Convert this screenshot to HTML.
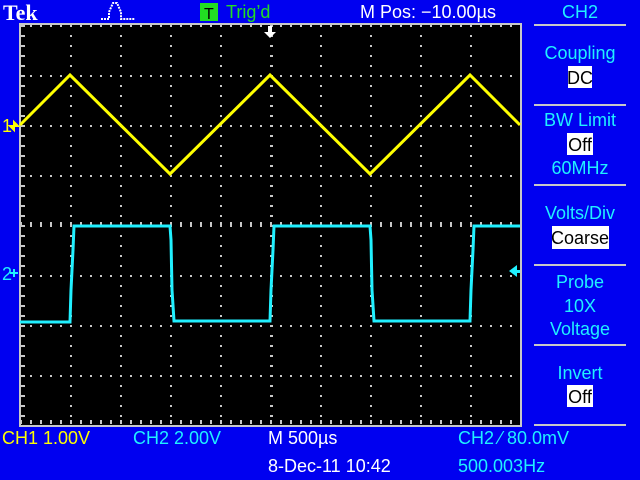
<!DOCTYPE html>
<html><head><meta charset="utf-8"><style>
html,body{margin:0;padding:0;background:#0000f0;}
svg{display:block}
text{font-family:"Liberation Sans Narrow","Liberation Sans",sans-serif;font-size:18px;}
</style></head><body>
<svg width="640" height="480" viewBox="0 0 640 480" xmlns="http://www.w3.org/2000/svg">
<defs>
<pattern id="hd" x="20" y="25" width="10" height="50" patternUnits="userSpaceOnUse"><rect x="0" y="0" width="2" height="2" fill="#c8c8c8"/></pattern>
<pattern id="vd" x="20" y="25" width="50" height="10" patternUnits="userSpaceOnUse"><rect x="0" y="0" width="2" height="2" fill="#c8c8c8"/></pattern>
<pattern id="tk" x="20" y="0" width="10" height="10" patternUnits="userSpaceOnUse"><rect x="0" y="0" width="2" height="5" fill="#c8c8c8"/></pattern>
<pattern id="tkv" x="0" y="25" width="10" height="10" patternUnits="userSpaceOnUse"><rect x="0" y="0" width="5" height="2" fill="#c8c8c8"/></pattern>
</defs>
<rect x="0" y="0" width="640" height="480" fill="#0000f0"/>
<rect x="20" y="24" width="501" height="402" fill="#000"/>
<rect x="20" y="24" width="501" height="402" fill="none" stroke="#c8c8c8" stroke-width="2"/>
<rect x="21" y="25" width="499" height="400" fill="url(#hd)"/>
<rect x="21" y="25" width="499" height="400" fill="url(#vd)"/>
<!-- edge ticks -->
<rect x="21" y="25" width="499" height="4" fill="url(#tk)" transform="translate(0,0)"/>
<rect x="21" y="420" width="499" height="4" fill="url(#tk)"/>
<rect x="21" y="25" width="4" height="399" fill="url(#tkv)"/>
<rect x="516" y="25" width="4" height="399" fill="url(#tkv)"/>
<!-- center ticks -->
<rect x="267" y="25" width="6" height="399" fill="url(#tkv)"/>
<rect x="21" y="222" width="499" height="6" fill="url(#tk)"/>
<!-- trigger pos marker -->
<polygon points="264,32 276,32 270,38" fill="#fff"/><rect x="268" y="26" width="4" height="7" fill="#fff"/>
<!-- yellow -->
<polyline points="20,125 70,75 170,174 270,75 370,174 470,75 520,125" fill="none" stroke="#ffff00" stroke-width="3"/>
<!-- cyan -->
<polyline points="20,322 70,322 71,290 73,250 74,226 170,226 171,240 172,290 174,321 270,321 271,290 273,250 274,226 370,226 371,240 372,290 374,321 470,321 471,290 473,250 474,226 520,226" fill="none" stroke="#20f0ff" stroke-width="3"/>
<polygon points="509,271 517,265 517,277" fill="#20f0ff"/><rect x="513" y="270" width="7" height="3" fill="#20f0ff"/>
<!-- left markers -->
<text x="2" y="132" fill="#ffff00">1</text><polygon points="10,126 18,126 14,122 14,130" fill="#ffff00" stroke="#ffff00" stroke-width="2"/>
<text x="2" y="280" fill="#20f0ff">2</text><polygon points="10,273 18,273" stroke="#20f0ff" stroke-width="2"/><line x1="14" y1="269" x2="14" y2="277" stroke="#20f0ff" stroke-width="2"/>
<!-- top bar -->
<text x="3" y="20" fill="#fff" style="font-family:'Liberation Serif',serif;font-weight:bold;font-size:22px">Tek</text>
<polyline points="101,19 109,19 109,12 113,3 117,3 121,12 121,19 135,19" fill="none" stroke="#fff" stroke-width="2" stroke-dasharray="2 1"/>
<rect x="200" y="3" width="18" height="18" fill="#22dd22"/>
<text x="204" y="19" fill="#000" style="font-size:16px">T</text>
<text x="226" y="18" fill="#22dd22">Trig’d</text>
<text x="360" y="18" fill="#fff">M Pos: −10.00µs</text>
<text x="580" y="18" fill="#20f0ff" text-anchor="middle">CH2</text>
<!-- right panel -->
<g fill="#c8c8c8"><rect x="534" y="24" width="92" height="2"/><rect x="534" y="104" width="92" height="2"/><rect x="534" y="184" width="92" height="2"/><rect x="534" y="264" width="92" height="2"/><rect x="534" y="344" width="92" height="2"/><rect x="534" y="424" width="92" height="2"/></g>
<g fill="#20f0ff" text-anchor="middle">
<text x="580" y="59">Coupling</text>
<text x="580" y="126">BW Limit</text>
<text x="580" y="174">60MHz</text>
<text x="580" y="219">Volts/Div</text>
<text x="580" y="288">Probe</text>
<text x="580" y="312">10X</text>
<text x="580" y="335">Voltage</text>
<text x="580" y="379">Invert</text>
</g>
<rect x="568" y="66" width="24" height="22" fill="#fff"/><text x="580" y="84" text-anchor="middle" fill="#000">DC</text>
<rect x="567" y="133" width="26" height="22" fill="#fff"/><text x="580" y="151" text-anchor="middle" fill="#000">Off</text>
<rect x="552" y="226" width="57" height="23" fill="#fff"/><text x="580" y="244" text-anchor="middle" fill="#000">Coarse</text>
<rect x="567" y="385" width="26" height="22" fill="#fff"/><text x="580" y="403" text-anchor="middle" fill="#000">Off</text>
<!-- bottom -->
<text x="2" y="444" fill="#ffff00">CH1  1.00V</text>
<text x="133" y="444" fill="#20f0ff">CH2  2.00V</text>
<text x="268" y="444" fill="#fff">M 500µs</text>
<text x="458" y="444" fill="#20f0ff">CH2 ⁄ 80.0mV</text>
<text x="268" y="472" fill="#fff">8-Dec-11 10:42</text>
<text x="458" y="472" fill="#20f0ff">500.003Hz</text>
</svg>
</body></html>
